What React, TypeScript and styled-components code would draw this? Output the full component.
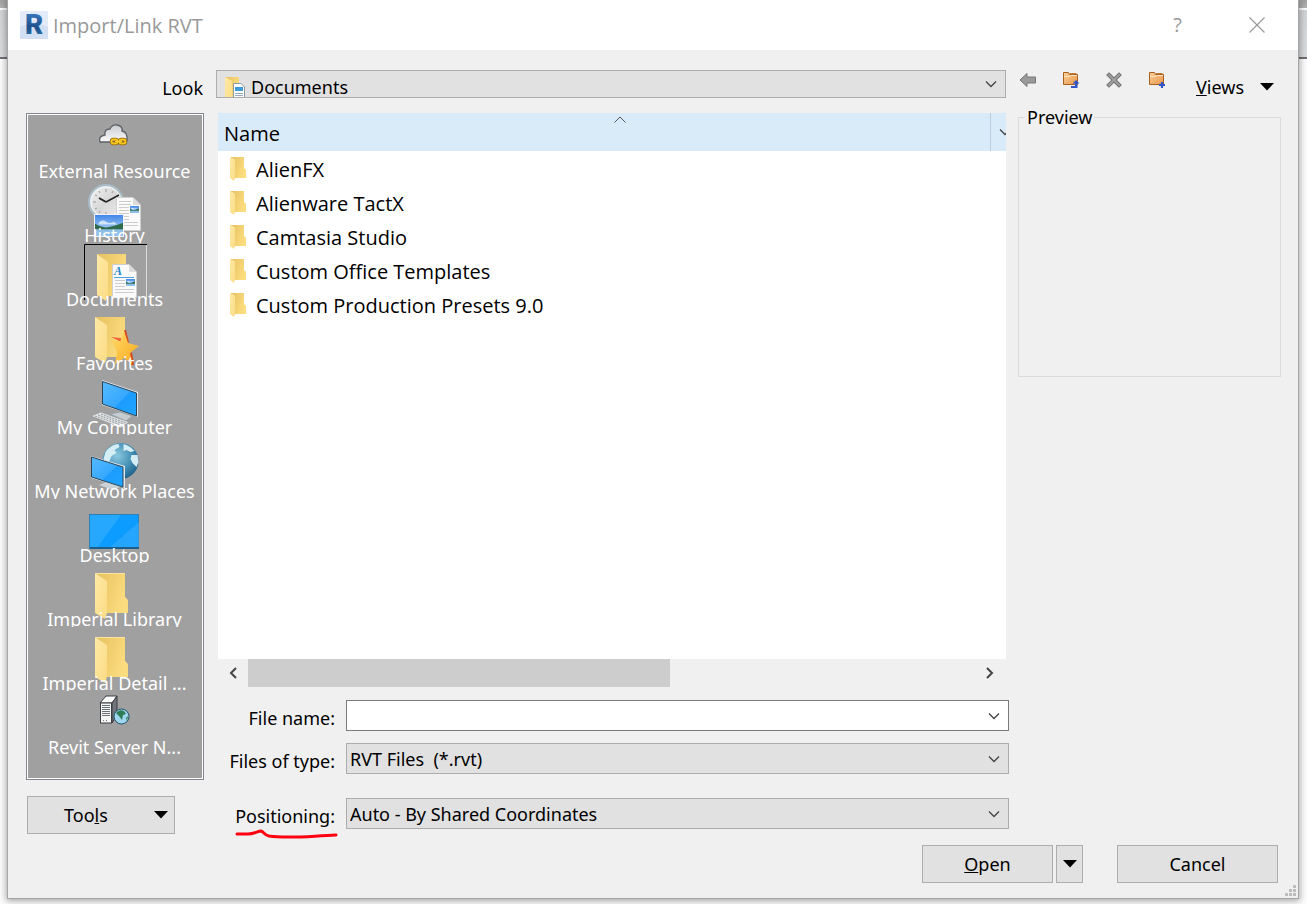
import React from "react";
import styled, { createGlobalStyle } from "styled-components";

const GlobalStyle = createGlobalStyle`
  *, *::before, *::after { box-sizing: border-box; }
  body { margin: 0; }
  button, input, select { font: inherit; color: inherit; margin: 0; }
`;

const uiFont = `"Noto Sans", "Open Sans", sans-serif`;
const listFont = `"Open Sans", "Noto Sans", sans-serif`;

const Backdrop = styled.div`
  min-height: 100vh;
  display: flex;
  padding: 0 8px 5px 7px;
  font-family: ${uiFont};
  font-size: 18px;
  line-height: 24px;
  color: #000;
  background: linear-gradient(
    #a0a0a0 0, #b4b4b4 8px, #fff 8px, #fff 10px, #d4d5d7 10px, #dcdddf 57px,
    #6f7174 57px, #6f7174 59px, #fdfdfd 59px
  );
`;

const Dialog = styled.main`
  flex: 1;
  display: flex;
  flex-direction: column;
  background: #f0f0f0;
  border: 1px solid #a6a6a6;
  border-top: 0;
  box-shadow: 0 1px 7px 1px rgba(0, 0, 0, 0.35);
  position: relative;
`;

const TitleBar = styled.header`
  display: flex;
  align-items: center;
  height: 50px;
  padding: 0 33px 0 12px;
  background: #fff;
  color: #999;
  font-family: ${listFont};
  font-size: 20px;
`;

const Title = styled.h1`
  flex: 1;
  margin: 0;
  padding: 2px 0 0 5px;
  font-size: inherit;
  font-weight: 400;
`;

const PlainButton = styled.button`
  display: flex;
  align-items: center;
  justify-content: center;
  padding: 0;
  border: 0;
  background: none;
`;

const WindowButtons = styled.div`
  display: flex;
  gap: 67px;
`;

const Body = styled.div`
  display: flex;
  flex-direction: column;
  flex: 1;
  padding: 20px 17px 15px 18px;
`;

const TopRow = styled.div`
  display: flex;
  align-items: flex-start;
  height: 43px;
`;

const LookLabel = styled.label`
  width: 190px;
  padding: 6px 13px 0 0;
  text-align: right;
`;

const LookBox = styled.div`
  flex: 1;
  position: relative;
`;

const Toolbar = styled.div`
  display: flex;
  align-items: flex-start;
  width: 275px;
  padding-left: 13px;
`;

const ToolButton = styled(PlainButton)`
  width: 18px;
  height: 20px;
  margin-right: 25px;
`;

const ViewsButton = styled(PlainButton)`
  gap: 16px;
  padding: 5px 0 0 5px;
`;

const SelectBox = styled.div`
  flex: 1;
  position: relative;
`;

const Select = styled.select<{ $height: number; $indent: number; $drop?: number }>`
  appearance: none;
  display: block;
  width: 100%;
  height: ${(p) => p.$height}px;
  padding: ${(p) => p.$drop ?? 0}px 32px 0 ${(p) => p.$indent}px;
  border: 1px solid #adadad;
  border-radius: 0;
  background: #e1e1e1;
`;

const FileInput = styled.input`
  display: block;
  width: 100%;
  height: 31px;
  padding: 0 32px 0 4px;
  border: 1px solid #7a7a7a;
  background: #fff;
`;

const BoxArrow = styled.span`
  position: absolute;
  top: 0;
  right: 8px;
  height: 100%;
  display: flex;
  align-items: center;
  pointer-events: none;
`;

const BoxIcon = styled.span`
  position: absolute;
  left: 9px;
  top: 6px;
  height: 21px;
  overflow: hidden;
  pointer-events: none;
`;

const Columns = styled.div`
  display: flex;
  align-items: stretch;
`;

const LeftColumn = styled.div`
  width: 178px;
  margin-right: 14px;
  display: flex;
  flex-direction: column;
  align-items: flex-start;
  gap: 16px;
`;

const Places = styled.nav`
  width: 100%;
  padding: 1px 2px 24px 1px;
  border: 1px solid #828790;
  box-shadow: inset 0 0 0 1px #fff;
  background: #a0a0a0;
`;

/* Each entry paints over the descenders of the label above it. */
const Place = styled.a`
  isolation: isolate;
  display: grid;
  justify-items: center;
  height: 64px;
  padding-top: 1px;
  background: #a0a0a0;
  color: #fff;
  text-decoration: none;
  & > * { grid-area: 1 / 1; }
`;

const PlaceLabel = styled.span`
  align-self: end;
  margin-bottom: -4px;
  white-space: nowrap;
`;

const PushButton = styled.button<{ $width: number }>`
  display: flex;
  align-items: center;
  justify-content: center;
  width: ${(p) => p.$width}px;
  height: 38px;
  padding: 0;
  border: 1px solid #adadad;
  background: #e1e1e1;
`;

const ToolsButton = styled(PushButton)`
  justify-content: space-between;
  margin-left: 1px;
  padding: 0 6px 0 36px;
`;

const MiddleColumn = styled.div`
  flex: 1;
  min-width: 0;
`;

const FileList = styled.div`
  height: 546px;
  margin-right: 3px;
  overflow: hidden;
  background: #fff;
`;

const FileTable = styled.table`
  width: calc(100% + 15px);
  border-collapse: collapse;
  font-family: ${listFont};
  font-size: 20px;
`;

const HeadCell = styled.th`
  position: relative;
  height: 38px;
  padding: 4px 0 0 6px;
  background: #d9ebf9;
  font-weight: 400;
  text-align: left;
`;

const SortMark = styled.svg`
  position: absolute;
  top: 3px;
  left: calc(50% - 6px);
`;

const HeadMenu = styled(PlainButton)`
  position: absolute;
  top: 0;
  right: 0;
  width: 31px;
  height: 38px;
  padding-right: 3px;
  border-left: 1px solid #b9cfe0;
`;

const FileCell = styled.td`
  height: 34px;
  padding: 0 0 0 11px;
`;

const FileName = styled.span`
  display: flex;
  align-items: flex-start;
  gap: 10px;
  height: 34px;
  padding-top: 5px;
  line-height: 28px;
`;

const ScrollBar = styled.div`
  display: flex;
  height: 28px;
  margin-right: 4px;
`;

const ScrollArrow = styled(PlainButton)`
  width: 30px;
`;

const ScrollTrack = styled.div`
  flex: 1;
`;

const ScrollThumb = styled.div`
  width: 58%;
  height: 100%;
  background: #cdcdcd;
`;

const Fields = styled.div`
  padding-top: 13px;
  display: flex;
  flex-direction: column;
  gap: 12px;
`;

const Field = styled.div<{ $apart?: boolean }>`
  display: flex;
  align-items: center;
  margin-top: ${(p) => (p.$apart ? 12 : 0)}px;
`;

const FieldLabel = styled.label`
  position: relative;
  width: 128px;
  padding: 4px 11px 0 0;
  text-align: right;
  white-space: nowrap;
`;

const PenStroke = styled.svg`
  position: absolute;
  right: 8px;
  top: 27px;
`;

const RightColumn = styled.div`
  width: 272px;
  padding-left: 9px;
`;

const Preview = styled.fieldset`
  height: 272px;
  margin: 0;
  margin-top: -8px;
  padding: 0;
  border: 1px solid #dcdcdc;
`;

const PreviewLegend = styled.legend`
  margin-left: 6px;
  padding: 0 2px;
`;

const Footer = styled.footer`
  display: flex;
  justify-content: flex-end;
  padding: 11px 3px 0 0;
`;

const OpenGroup = styled.div`
  display: flex;
  gap: 3px;
  margin-right: 34px;
`;

const Grip = styled.svg`
  position: absolute;
  right: 1px;
  bottom: 1px;
`;

const Chevron = () => (
  <svg width="14" height="10" viewBox="0 0 14 10" fill="none" stroke="#444" strokeWidth="1.3">
    <path d="M2 2.500 L7 7.500 L12 2.500" />
  </svg>
);

const Triangle = () => (
  <svg width="14" height="8" viewBox="0 0 14 8">
    <path d="M0 0 H14 L7 7.5 Z" fill="#000" />
  </svg>
);

const HiddenSvg = styled.svg`
  position: absolute;
`;

const Defs = () => (
  <HiddenSvg width="0" height="0" aria-hidden="true">
    <defs>
      <linearGradient id="flap" x1="0" y1="0" x2="1" y2="1">
        <stop offset="0" stopColor="#ffe9a6" /><stop offset="1" stopColor="#fbdc85" />
      </linearGradient>
      <linearGradient id="back" x1="0" y1="0" x2="1" y2="0.4">
        <stop offset="0" stopColor="#e6c05f" /><stop offset="1" stopColor="#fbdc7e" />
      </linearGradient>
      <linearGradient id="screen" x1="0" y1="0" x2="1" y2="1">
        <stop offset="0" stopColor="#56baff" /><stop offset="0.55" stopColor="#36a8ff" />
        <stop offset="0.56" stopColor="#1c9cff" /><stop offset="1" stopColor="#1fa4ff" />
      </linearGradient>
      <linearGradient id="cloud" x1="0" y1="0" x2="0" y2="1">
        <stop offset="0" stopColor="#c9ccd2" /><stop offset="1" stopColor="#fafafa" />
      </linearGradient>
      <radialGradient id="globe" cx="0.4" cy="0.35" r="0.7">
        <stop offset="0" stopColor="#8cc9e0" /><stop offset="0.6" stopColor="#438fb5" />
        <stop offset="1" stopColor="#1f5f87" />
      </radialGradient>
      <linearGradient id="face" x1="0" y1="0" x2="1" y2="1">
        <stop offset="0" stopColor="#f4f4f4" /><stop offset="0.5" stopColor="#d8d8d8" />
        <stop offset="1" stopColor="#ededed" />
      </linearGradient>
      <linearGradient id="sky" x1="0" y1="0" x2="0" y2="1">
        <stop offset="0" stopColor="#3f86e8" /><stop offset="1" stopColor="#d6ecfb" />
      </linearGradient>
      <linearGradient id="star" x1="0" y1="0" x2="1" y2="1">
        <stop offset="0" stopColor="#ffdf6b" /><stop offset="1" stopColor="#f9a51d" />
      </linearGradient>
      <linearGradient id="orange" x1="0" y1="0" x2="1" y2="1">
        <stop offset="0" stopColor="#fbd09a" /><stop offset="1" stopColor="#e8964a" />
      </linearGradient>
      <linearGradient id="revit" x1="0" y1="0" x2="0" y2="1">
        <stop offset="0" stopColor="#3f86cf" /><stop offset="0.6" stopColor="#1f4f8c" />
        <stop offset="1" stopColor="#2f86b4" />
      </linearGradient>
    </defs>
  </HiddenSvg>
);

const FolderShape = () => (
  <g>
    <path d="M12 9 H42 V33 L45 36 V49 H23 V17 Z" fill="url(#back)" />
    <path d="M12 9 L24 17 V49 L22 55 L12 49 Z" fill="url(#flap)" />
    <path d="M12.5 9.5 H41.5" stroke="#fbe29b" />
  </g>
);

const Picture = ({ x, y, w, h }: { x: number; y: number; w: number; h: number }) => (
  <svg x={x} y={y} width={w} height={h} viewBox="0 0 30 22" preserveAspectRatio="none">
    <rect width="30" height="22" fill="url(#sky)" />
    <path d="M4 8 Q8 4 12 7 T20 7 L24 10 H4 Z" fill="#e6f1fb" opacity="0.8" />
    <path d="M0 9 Q6 13 12 13 Q20 12 30 8 V16 H0 Z" fill="#2f6b4a" />
    <rect y="15" width="30" height="7" fill="#8fc0e8" />
  </svg>
);

const Sheet = ({ x, y, letter }: { x: number; y: number; letter?: boolean }) => (
  <svg x={x} y={y} width="25" height="34" viewBox="0 0 25 34">
    <path d="M0.5 0.5 H17 L24.5 8 V33.5 H0.5 Z" fill="#fafafa" stroke="#d0d0d0" />
    <path d="M17 0.5 V8 H24.5 Z" fill="#dcdcdc" />
    <path d="M3 16.5 H13 M3 19.5 H13 M3 22.5 H13 M3 25.5 H22 M3 28.5 H22" stroke="#cdcdcd" />
    {letter ? (
      <>
        <text x="2" y="11" fontFamily="Liberation Serif" fontStyle="italic" fontWeight="700" fontSize="12" fill="#1c86c8">A</text>
        <path d="M2 13.5 H22" stroke="#4aa3da" />
        <Picture x={14} y={15} w={9} h={7} />
      </>
    ) : (
      <>
        <path d="M3 4.5 H15 M3 7.5 H15 M3 10.5 H13 M3 13.5 H13" stroke="#cdcdcd" />
        <Picture x={14} y={9} w={9} h={7} />
      </>
    )}
  </svg>
);

const Continents = () => (
  <path
    d="M-15 -9 Q-9 -17 -2 -17 L-1 -14 L-6 -11 L-4 -8 L-9 -5 L-11 0 L-14 2 L-17 -2 Z M3 -17 Q10 -15 14 -10 L10 -9 L6 -11 L3 -10 Z M11 -6 L17 -6 L18 1 L16 6 L12 2 L10 -2 Z"
    fill="#d5eef5"
  />
);

const placeIcons: Record<string, React.ReactNode> = {
  cloud: (
    <g>
      <path d="M17 26 Q15 20 22 19 Q21 13 27 13 Q29 8 34 9 Q40 10 39 15 Q45 16 44 25 Q44 26 42 26 Z" fill="url(#cloud)" stroke="#5d6066" strokeWidth="1.3" />
      <g fill="none" stroke="#8c6208" strokeWidth="3.4">
        <rect x="28.500" y="23.500" width="6" height="4" rx="2" /><rect x="36.500" y="23.500" width="6" height="4" rx="2" /><path d="M32 25.500 H39" />
      </g>
      <g fill="none" stroke="#fcc820" strokeWidth="1.8">
        <rect x="28.500" y="23.500" width="6" height="4" rx="2" /><rect x="36.500" y="23.500" width="6" height="4" rx="2" /><path d="M32 25.500 H39" />
      </g>
    </g>
  ),
  history: (
    <g>
      <circle cx="23" cy="22" r="17" fill="url(#face)" stroke="#a9bcc6" strokeWidth="2" />
      <circle cx="23" cy="22" r="15" fill="none" stroke="#f4f8fa" />
      <path d="M23 9 V12 M23 32 V35 M10 22 H13 M16 11 L17 13 M30 11 L29 13 M12 15 L14 16 M12 29 L14 28 M16 33 L17 31" stroke="#9b9b9b" />
      <path d="M23 22 L36 15" stroke="#222" strokeWidth="1.500" />
      <path d="M23 22 L16 18" stroke="#222" strokeWidth="2" />
      <Sheet x={33} y={17} />
      <rect x="11" y="34" width="30" height="23" fill="#f2f2f2" />
      <Picture x={12} y={35} w={28} h={21} />
    </g>
  ),
  documents: (
    <g>
      <path d="M1.500 56 V0.500 H64" fill="none" stroke="#000" />
      <path d="M63.500 1 V56" stroke="#d9d9d9" />
      <path d="M14 10 H43 V52 H24 V18 Z" fill="url(#back)" />
      <path d="M14 10 L25 18 V51 L23 57 L14 51 Z" fill="url(#flap)" />
      <Sheet x={29} y={20} letter />
    </g>
  ),
  favorites: (
    <g>
      <path d="M12 9 H42 V49 H23 V17 Z" fill="url(#back)" />
      <path d="M12 9 L24 17 V49 L22 55 L12 49 Z" fill="url(#flap)" />
      <path d="M41 22 L43 22 L46 34 L44 36 Z M46 46 L49 44 L51 57 L48 57 Z" fill="#d64c1e" />
      <path d="M28 29 L38 30 L38 34 Z" fill="#f0683c" />
      <path d="M41 23 L45 35 L56 38 L47 45 L49 56 L41 50 L32 56 L34 44 L28 31 L37 34 Z" fill="url(#star)" />
    </g>
  ),
  computer: (
    <g>
      <path d="M27 42 L37 40 L49 44 L43 49 Z" fill="#c6cdd2" stroke="#8d959b" strokeWidth="0.600" />
      <path d="M8 44 L18 40 L46 50 L38 56 Z" fill="#dfe3e5" stroke="#8d8d8d" strokeWidth="0.600" />
      <path d="M12 44 L38 53 M15 43 L41 52 M18 42 L43 51" stroke="#989ea2" strokeDasharray="2 1" />
      <path d="M19 8 L55 20 V45 L19 33 Z" fill="#dfe8ee" />
      <path d="M19.500 9.500 L53.500 21 V44 L19.500 32 Z" fill="url(#screen)" stroke="#2b4354" strokeWidth="1" />
    </g>
  ),
  network: (
    <g>
      <circle cx="37.500" cy="25" r="18" fill="url(#globe)" />
      <g transform="translate(37.5 25)"><Continents /></g>
      <path d="M16 49 L26 45 L37 51 L30 54 Z" fill="#ccd3d8" />
      <path d="M8 20 L42 30 V52 L8 42 Z" fill="#dfe8ee" />
      <path d="M8.500 21 L40 31 V51 L8.500 41 Z" fill="url(#screen)" stroke="#2b4354" strokeWidth="1" />
    </g>
  ),
  desktop: (
    <g>
      <rect x="6.500" y="14.500" width="49" height="34" fill="#0c9bff" stroke="#2d7fb8" />
      <path d="M7 15 H38 L14 48 H7 Z" fill="#27a8ff" />
      <path d="M56 22 V48 H26 Z" fill="#3fb0ff" opacity="0.500" />
      <rect x="7" y="47" width="49" height="2" fill="#1c5f8e" />
    </g>
  ),
  folder: <FolderShape />,
  server: (
    <g>
      <path d="M17 11 L23 4 H34 L29 11 Z" fill="#fff" stroke="#3a3d42" />
      <path d="M29 11 L34 4 V23 L29 31 Z" fill="#70757c" stroke="#3a3d42" />
      <rect x="17.500" y="11" width="11" height="20" fill="#f5f5f5" stroke="#3a3d42" />
      <path d="M19 13.500 H27 M19 15.500 H27 M19 17.500 H27 M19 19.500 H27 M19 21.500 H27 M19 23.500 H27 M20 28.500 H21 M23 28.500 H24" stroke="#6e737a" />
      <circle cx="38.500" cy="24.500" r="7.500" fill="#9fd6f0" stroke="#1f4e66" />
      <path d="M33 21 Q36 17 41 19 L43 22 L40 23 L39 28 L36 24 Z M43 26 L45 24 L44 29 Z" fill="#2e7d55" />
    </g>
  ),
};

const places = [
  ["External Resource", "cloud"],
  ["History", "history"],
  ["Documents", "documents"],
  ["Favorites", "favorites"],
  ["My Computer", "computer"],
  ["My Network Places", "network"],
  ["Desktop", "desktop"],
  ["Imperial Library", "folder"],
  ["Imperial Detail ...", "folder"],
  ["Revit Server N...", "server"],
];

const files = [
  "AlienFX",
  "Alienware TactX",
  "Camtasia Studio",
  "Custom Office Templates",
  "Custom Production Presets 9.0",
];

const SmallFolder = () => (
  <svg width="17" height="25" viewBox="0 0 17 25">
    <path d="M1 1 H15 V12 L17 14 V22 H6 V4 Z" fill="url(#back)" />
    <path d="M1 1 L6 4 V22 L5 25 L1 22 Z" fill="url(#flap)" />
  </svg>
);

const OrangeFolder = ({ badge }: { badge: "up" | "plus" }) => (
  <svg width="18" height="18" viewBox="0 0 18 18">
    <path d="M1.500 13.500 V1.500 H6.500 L7.500 3.500 H15.500 V13.500 Z" fill="url(#orange)" stroke="#a8601e" />
    <path d="M2 5.500 H7 L8.500 4.500 H15" stroke="#fde3c0" fill="none" />
    <path d="M8 2.500 H14.500" stroke="#c27a35" />
    {badge === "up" ? (
      <path d="M9 15 H13 V12.500 H10.500 L14 9 L17.500 12.500 H15.500 V17 H9 Z" fill="#2f55c8" />
    ) : (
      <path d="M14 11 V17 M11 14 H17" stroke="#2f55c8" strokeWidth="2.200" />
    )}
  </svg>
);

export default function App() {
  return (
    <Backdrop>
      <GlobalStyle />
      <Defs />
      <Dialog>
        <TitleBar>
          <svg width="28" height="28" viewBox="0 0 28 28" overflow="visible">
            <rect width="28" height="28" fill="#e3ebf8" />
            <path d="M0 16 L14 10 L28 16 V28 H0 Z" fill="#d3e0f4" />
            <text x="5" y="23" fontFamily="Roboto" fontWeight="900" fontSize="28" fill="url(#revit)">R</text>
          </svg>
          <Title>Import/Link RVT</Title>
          <WindowButtons>
            <PlainButton aria-label="Help">?</PlainButton>
            <PlainButton aria-label="Close">
              <svg width="16" height="16" viewBox="0 0 16 16" stroke="#999" strokeWidth="1.200">
                <path d="M0.500 0.500 L15.500 15.500 M15.500 0.500 L0.500 15.500" />
              </svg>
            </PlainButton>
          </WindowButtons>
        </TitleBar>
        <Body>
          <TopRow>
            <LookLabel htmlFor="look">Look</LookLabel>
            <LookBox>
              <Select id="look" $height={28} $indent={34} $drop={4}>
                <option>Documents</option>
              </Select>
              <BoxIcon>
                <svg width="21" height="26" viewBox="0 0 21 26">
                  <path d="M0 1 H14 V22 H6 V5 Z" fill="url(#back)" />
                  <path d="M0 1 L7 5 V22 L5 26 L0 22 Z" fill="url(#flap)" />
                  <path d="M8.500 7.500 H16 L19.500 11 V22 H8.500 Z" fill="#fff" stroke="#8e9aa3" />
                  <rect x="10" y="11" width="8" height="4" fill="#3f9ad8" />
                  <path d="M10 17.500 H18 M10 19.500 H18" stroke="#9ab" />
                </svg>
              </BoxIcon>
              <BoxArrow><Chevron /></BoxArrow>
            </LookBox>
            <Toolbar>
              <ToolButton aria-label="Back">
                <svg width="18" height="16" viewBox="0 0 18 16">
                  <path d="M1 8 L8 1.500 V5 H16.500 V11 H8 V14.500 Z" fill="#9a9a9a" stroke="#777" />
                </svg>
              </ToolButton>
              <ToolButton aria-label="Up one level"><OrangeFolder badge="up" /></ToolButton>
              <ToolButton aria-label="Delete">
                <svg width="16" height="16" viewBox="0 0 16 16" strokeLinecap="square">
                  <path d="M3 3 L13 13 M13 3 L3 13" stroke="#707070" strokeWidth="4" />
                  <path d="M3 3 L13 13 M13 3 L3 13" stroke="#a0a0a0" strokeWidth="2" />
                </svg>
              </ToolButton>
              <ToolButton aria-label="New folder"><OrangeFolder badge="plus" /></ToolButton>
              <ViewsButton>
                <span><u>V</u>iews</span>
                <Triangle />
              </ViewsButton>
            </Toolbar>
          </TopRow>
          <Columns>
            <LeftColumn>
              <Places>
                {places.map(([name, icon]) => (
                  <Place key={name} href="#">
                    <svg width="64" height="62" viewBox="0 0 64 62">{placeIcons[icon]}</svg>
                    <PlaceLabel>{name}</PlaceLabel>
                  </Place>
                ))}
              </Places>
              <ToolsButton $width={148}>
                <span>Too<u>l</u>s</span>
                <Triangle />
              </ToolsButton>
            </LeftColumn>
            <MiddleColumn>
              <FileList>
                <FileTable>
                  <thead>
                    <tr>
                      <HeadCell>
                        Name
                        <SortMark width="12" height="7" viewBox="0 0 12 7" fill="none" stroke="#555">
                          <path d="M0.500 6.500 L6 1 L11.500 6.500" />
                        </SortMark>
                        <HeadMenu aria-label="Filter"><Chevron /></HeadMenu>
                      </HeadCell>
                    </tr>
                  </thead>
                  <tbody>
                    {files.map((f) => (
                      <tr key={f}>
                        <FileCell><FileName><SmallFolder />{f}</FileName></FileCell>
                      </tr>
                    ))}
                  </tbody>
                </FileTable>
              </FileList>
              <ScrollBar>
                <ScrollArrow aria-label="Scroll left">
                  <svg width="10" height="14" viewBox="0 0 10 14" fill="none" stroke="#444" strokeWidth="2"><path d="M8 2 L3 7 L8 12" /></svg>
                </ScrollArrow>
                <ScrollTrack><ScrollThumb /></ScrollTrack>
                <ScrollArrow aria-label="Scroll right">
                  <svg width="10" height="14" viewBox="0 0 10 14" fill="none" stroke="#444" strokeWidth="2"><path d="M2 2 L7 7 L2 12" /></svg>
                </ScrollArrow>
              </ScrollBar>
              <Fields>
                <Field>
                  <FieldLabel htmlFor="name">File name:</FieldLabel>
                  <SelectBox><FileInput id="name" /><BoxArrow><Chevron /></BoxArrow></SelectBox>
                </Field>
                <Field>
                  <FieldLabel htmlFor="type">Files of type:</FieldLabel>
                  <SelectBox>
                    <Select id="type" $height={31} $indent={3}><option>RVT Files&nbsp; (*.rvt)</option></Select>
                    <BoxArrow><Chevron /></BoxArrow>
                  </SelectBox>
                </Field>
                <Field $apart>
                  <FieldLabel htmlFor="pos">
                    Positioning:
                    <PenStroke width="104" height="14" viewBox="0 0 104 14" fill="none" stroke="#ff0010" strokeWidth="3" strokeLinecap="round">
                      <path d="M3 7 H14 C20 7 24 4 27 4 C30 5 30 8 35 9 C54 12 76 9 102 8" />
                    </PenStroke>
                  </FieldLabel>
                  <SelectBox>
                    <Select id="pos" $height={31} $indent={3}><option>Auto - By Shared Coordinates</option></Select>
                    <BoxArrow><Chevron /></BoxArrow>
                  </SelectBox>
                </Field>
              </Fields>
            </MiddleColumn>
            <RightColumn>
              <Preview><PreviewLegend>Preview</PreviewLegend></Preview>
            </RightColumn>
          </Columns>
          <Footer>
            <OpenGroup>
              <PushButton $width={131}><span><u>O</u>pen</span></PushButton>
              <PushButton $width={27} aria-label="Open options"><Triangle /></PushButton>
            </OpenGroup>
            <PushButton $width={161}>Cancel</PushButton>
          </Footer>
        </Body>
        <Grip width="12" height="12" viewBox="0 0 12 12" fill="#bdbdbd">
          <path d="M8 0h3v3h-3z M4 4h3v3h-3z M8 4h3v3h-3z M0 8h3v3h-3z M4 8h3v3h-3z M8 8h3v3h-3z" />
        </Grip>
      </Dialog>
    </Backdrop>
  );
}
